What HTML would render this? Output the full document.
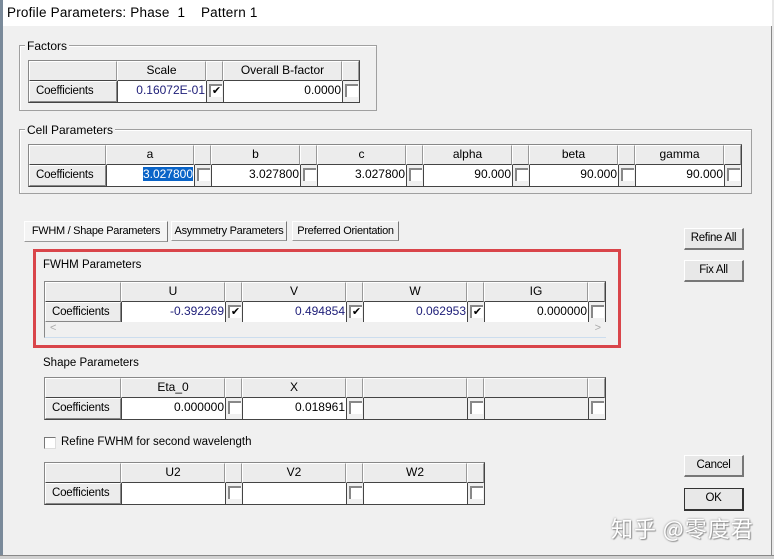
<!DOCTYPE html>
<html><head><meta charset="utf-8"><style>
*{box-sizing:border-box;margin:0;padding:0;white-space:nowrap}
body{width:774px;height:559px;overflow:hidden;background:#f0f0f0;font-family:"Liberation Sans",Arial,sans-serif;font-size:12px;color:#000;position:relative}
.a{position:absolute}
.title{left:3px;top:0;width:769px;height:26px;background:#fff;font-size:13.5px;padding:5px 0 0 4px;letter-spacing:.2px}
.lstrip{left:0;top:0;width:3px;height:559px;background:#7a8a9a}
.rstrip{left:771px;top:0;width:3px;height:559px;background:#e8e8e8;border-left:1px solid #888}
.bstrip{left:0;top:555px;width:774px;height:4px;background:#d0d0d0;border-top:1px solid #888}
.grp{border:1px solid #a0a0a0;box-shadow:inset 1px 1px 0 #fff}
.gl{background:#f0f0f0;padding:0 2px;font-size:12px}
.g{display:grid;border:1px solid #444;border-top-color:#888;border-left-color:#888;background:#444;gap:0}
.h{background:#ececec;border-top:1px solid #fff;border-left:1px solid #fff;border-right:1px solid #999;border-bottom:1px solid #444;text-align:center;line-height:17px;font-size:12px}
.lb{background:#ececec;border:1px solid #fff;border-right-color:#888;border-bottom-color:#888;padding-left:6px;line-height:18px;font-size:11.5px;letter-spacing:-.2px}
.v{background:#fff;text-align:right;padding-right:1px;line-height:19px;border-left:1px solid #444}
.blue{color:#20207a}
.c{background:#f0f0f0;position:relative;border-left:1px solid #444}
.c i{position:absolute;left:2px;top:3px;width:13px;height:13px;background:#fff;border-top:2px solid #888;border-left:2px solid #888;font-style:normal;font-size:11px;line-height:11px;text-align:center}
.btn{background:#e8e8e8;border:1px solid #fff;border-right:2px solid #777;border-bottom:2px solid #777;text-align:center;line-height:18px;font-size:11.5px;letter-spacing:-.3px}
.tab{background:#f0f0f0;border:1px solid #fff;border-right:1px solid #777;border-bottom:1px solid #999;text-align:center;line-height:18px;font-size:11px;letter-spacing:-.3px;overflow:hidden}
.sel{background:#0a64c8;color:#fff}
</style></head><body>
<div class="a lstrip"></div>
<div class="a rstrip"></div>
<div class="a title">Profile Parameters: Phase&nbsp; 1&nbsp;&nbsp;&nbsp; Pattern 1</div>

<div class="a grp" style="left:19px;top:45px;width:358px;height:66px"></div>
<div class="a gl" style="left:25px;top:39px">Factors</div>
<div class="a g" style="left:28px;top:60px;grid-template-columns:88px 89px 17px 119px 17px;grid-template-rows:20px 21px;width:332px">
<div class="h"></div><div class="h">Scale</div><div class="h"></div><div class="h">Overall B-factor</div><div class="h"></div>
<div class="lb">Coefficients</div><div class="v blue">0.16072E-01</div><div class="c"><i>✔</i></div><div class="v">0.0000</div><div class="c"><i></i></div>
</div>

<div class="a grp" style="left:19px;top:129px;width:733px;height:65px"></div>
<div class="a gl" style="left:25px;top:123px">Cell Parameters</div>
<div class="a g" style="left:28px;top:144px;grid-template-columns:77px 88px 17px 89px 17px 89px 17px 89px 17px 89px 17px 89px 17px;grid-template-rows:20px 21px;width:714px">
<div class="h"></div><div class="h">a</div><div class="h"></div><div class="h">b</div><div class="h"></div><div class="h">c</div><div class="h"></div><div class="h">alpha</div><div class="h"></div><div class="h">beta</div><div class="h"></div><div class="h">gamma</div><div class="h"></div>
<div class="lb">Coefficients</div><div class="v"><span class="sel">3.027800</span></div><div class="c"><i></i></div><div class="v">3.027800</div><div class="c"><i></i></div><div class="v">3.027800</div><div class="c"><i></i></div><div class="v">90.000</div><div class="c"><i></i></div><div class="v">90.000</div><div class="c"><i></i></div><div class="v">90.000</div><div class="c"><i></i></div>
</div>

<div class="a tab" style="left:24px;top:221px;width:144px;height:21px;background:#f4f4f4">FWHM / Shape Parameters</div>
<div class="a tab" style="left:171px;top:221px;width:116px;height:20px">Asymmetry Parameters</div>
<div class="a tab" style="left:292px;top:221px;width:107px;height:20px">Preferred Orientation</div>

<div class="a btn" style="left:684px;top:228px;width:60px;height:22px">Refine All</div>
<div class="a btn" style="left:684px;top:260px;width:60px;height:22px">Fix All</div>
<div class="a btn" style="left:684px;top:455px;width:60px;height:22px">Cancel</div>
<div class="a btn" style="left:684px;top:488px;width:60px;height:23px;border:1px solid #333;border-right:2px solid #333;border-bottom:2px solid #333">OK</div>

<div class="a" style="left:33px;top:249px;width:588px;height:99px;border:3px solid #d9454a"></div>
<div class="a" style="left:43px;top:259px;font-size:11.5px">FWHM Parameters</div>
<div class="a g" style="left:44px;top:281px;grid-template-columns:76px 104px 17px 104px 17px 104px 17px 104px 17px;grid-template-rows:20px 20px;width:562px">
<div class="h"></div><div class="h">U</div><div class="h"></div><div class="h">V</div><div class="h"></div><div class="h">W</div><div class="h"></div><div class="h">IG</div><div class="h"></div>
<div class="lb">Coefficients</div><div class="v blue">-0.392269</div><div class="c"><i>✔</i></div><div class="v blue">0.494854</div><div class="c"><i>✔</i></div><div class="v blue">0.062953</div><div class="c"><i>✔</i></div><div class="v">0.000000</div><div class="c"><i></i></div>
</div>
<div class="a" style="left:44px;top:322px;width:562px;height:16px;background:#f0f0f0;border-left:1px solid #888;border-bottom:1px solid #cde;color:#aaa;font-size:11px;padding-left:5px">&lt;<span style="float:right;padding-right:5px">&gt;</span></div>

<div class="a" style="left:43px;top:357px;font-size:11.5px">Shape Parameters</div>
<div class="a g" style="left:44px;top:377px;grid-template-columns:76px 104px 17px 104px 17px 104px 17px 104px 17px;grid-template-rows:20px 21px;width:562px">
<div class="h"></div><div class="h">Eta_0</div><div class="h"></div><div class="h">X</div><div class="h"></div><div class="h"></div><div class="h"></div><div class="h"></div><div class="h"></div>
<div class="lb">Coefficients</div><div class="v">0.000000</div><div class="c"><i></i></div><div class="v">0.018961</div><div class="c"><i></i></div><div class="v" style="background:#f0f0f0"></div><div class="c"><i></i></div><div class="v" style="background:#f0f0f0"></div><div class="c"><i></i></div>
</div>

<div class="a" style="left:44px;top:437px;width:12px;height:12px;background:#fff;border:1px solid #777;border-right-color:#ddd;border-bottom-color:#ddd"></div>
<div class="a" style="left:61px;top:436px;font-size:11.5px">Refine FWHM for second wavelength</div>

<div class="a g" style="left:44px;top:462px;grid-template-columns:76px 104px 17px 104px 17px 104px 17px;grid-template-rows:20px 21px;width:441px">
<div class="h"></div><div class="h">U2</div><div class="h"></div><div class="h">V2</div><div class="h"></div><div class="h">W2</div><div class="h"></div>
<div class="lb">Coefficients</div><div class="v"></div><div class="c"><i></i></div><div class="v"></div><div class="c"><i></i></div><div class="v"></div><div class="c"><i></i></div>
</div>

<div class="a" style="left:611px;top:512px;font-family:'Noto Sans CJK SC',sans-serif;font-size:22px;color:#fff;text-shadow:0 0 2px #888,1px 1px 1px #999;letter-spacing:1px">知乎 @零度君</div>
<div class="a bstrip"></div>
</body></html>
